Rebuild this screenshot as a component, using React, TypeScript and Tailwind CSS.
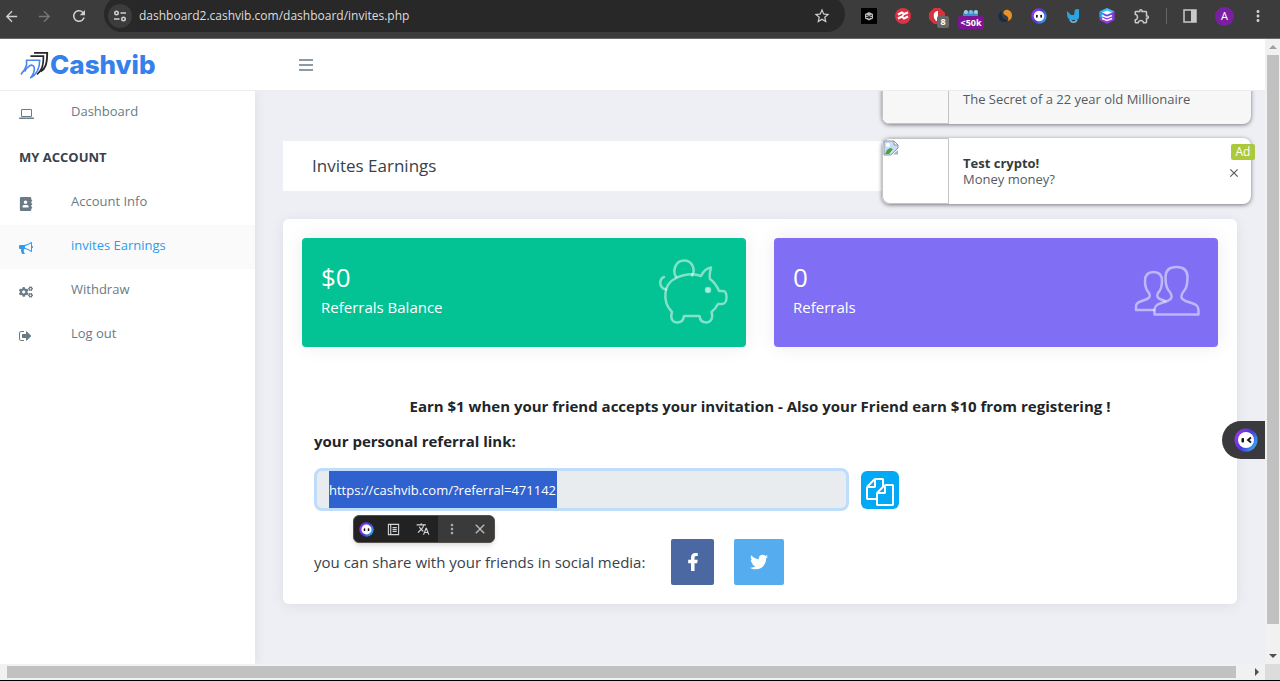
import React, { useEffect, useRef } from "react";
import { FaAddressBook, FaCogs, FaFacebookF, FaTwitter } from "react-icons/fa";
import { MdArrowBack, MdArrowForward, MdRefresh, MdStarBorder, MdMoreVert, MdOutlineExtension, MdTranslate, MdClose } from "react-icons/md";

function LaptopIcon() {
  return (
    <svg viewBox="0 0 1920 1536" className="h-3 w-[15px]" fill="currentColor" aria-hidden="true">
      <path d="M416 1152q-66 0-113-47t-47-113v-704q0-66 47-113t113-47h1088q66 0 113 47t47 113v704q0 66-47 113t-113 47h-1088zm-32-864v704q0 13 9.5 22.5t22.5 9.5h1088q13 0 22.5-9.5t9.5-22.5v-704q0-13-9.5-22.5t-22.5-9.5h-1088q-13 0-22.5 9.5t-9.5 22.5zm1376 928h160v96q0 40-47 68t-113 28h-1600q-66 0-113-28t-47-68v-96h1760zm-720 96q16 0 16-16t-16-16h-160q-16 0-16 16t16 16h160z" />
    </svg>
  );
}

function BullhornIcon() {
  return (
    <svg viewBox="0 0 1792 1792" className="size-[14px]" fill="currentColor" aria-hidden="true">
      <path d="M1664 640q53 0 90.5 37.5t37.5 90.5-37.5 90.5-90.5 37.5v384q0 52-38 90t-90 38q-417-347-812-380-58 19-91 66t-31 100.5 40 92.5q-20 33-23 65.5t6 58 33.5 55 48 50 61.5 50.5q-29 58-111.5 83t-168.5 11.5-132-55.5q-7-23-29.5-87.5t-32-94.5-23-89-15-101 3.5-98.5 22-110.5h-122q-66 0-113-47t-47-113v-192q0-66 47-113t113-47h480q435 0 896-384 52 0 90 38t38 90v384zm-128 604v-954q-394 302-768 343v270q377 42 768 341z" />
    </svg>
  );
}

function SignOutIcon() {
  return (
    <svg viewBox="0 0 1792 1792" className="size-[14px]" fill="currentColor" aria-hidden="true">
      <path d="M640 1440q0 4 1 20t.5 26.5-3 23.5-10 19.5-20.5 6.5h-320q-119 0-203.5-84.5t-84.5-203.5v-704q0-119 84.5-203.5t203.5-84.5h320q13 0 22.5 9.5t9.5 22.5q0 4 1 20t.5 26.5-3 23.5-10 19.5-20.5 6.5h-320q-66 0-113 47t-47 113v704q0 66 47 113t113 47h312l11.5 1 11.5 3 8 5.5 7 9 2 13.5zm928-544q0 26-19 45l-544 544q-19 19-45 19t-45-19-19-45v-288h-448q-26 0-45-19t-19-45v-384q0-26 19-45t45-19h448v-288q0-26 19-45t45-19 45 19l544 544q19 19 19 45z" />
    </svg>
  );
}

function FilesIcon() {
  return (
    <svg viewBox="0 0 1792 1792" className="size-7" fill="currentColor" aria-hidden="true">
      <path d="M1696 384q40 0 68 28t28 68v1216q0 40-28 68t-68 28h-960q-40 0-68-28t-28-68v-288h-544q-40 0-68-28t-28-68v-672q0-40 20-88t48-76l408-408q28-28 76-48t88-20h416q40 0 68 28t28 68v328q68-40 128-40h416zm-544 213l-299 299h299v-299zm-640-384l-299 299h299v-299zm196 647l316-316v-416h-384v416q0 40-28 68t-68 28h-416v640h512v-256q0-40 20-88t48-76zm956 804v-1152h-384v416q0 40-28 68t-68 28h-416v640h896z" />
    </svg>
  );
}

function PiggyIcon() {
  return (
    <svg viewBox="0 0 70 66" className="h-[66px] w-[70px] text-white/50" fill="none" stroke="currentColor" strokeWidth="2.5" strokeLinecap="round" strokeLinejoin="round" aria-hidden="true">
      <path d="M18 19C14 12 18 2.500 26 2.500S38 11 34 17.500" />
      <path d="M6 19C1 21 .5 30 8 31.500" />
      <path d="M18 20C28 15.500 36 15.500 43 18C45 14 49 10 53 9.500C52 14 51 18 52 21C56 24 59 28 61 33H65C67 33 68.500 35 68.500 39.500S66 46 64 46H60C58 50 56 52 53.500 54C55.500 60 53 64.500 48 64.500C44 64.500 42 62 41.500 58H26C25.500 62 23.500 64.500 19.500 64.500C14 64.500 12 60 14 54C9 49 6.500 43 7.500 35C8 29 12 23 18 20Z" />
      <circle cx="50" cy="32" r="2" fill="currentColor" />
    </svg>
  );
}

function PeopleIcon() {
  return (
    <svg viewBox="0 0 66 52" className="h-[52px] w-[66px] text-white/50" fill="none" stroke="currentColor" strokeWidth="2.5" strokeLinejoin="round" strokeLinecap="round" aria-hidden="true">
      <path d="M42.500 2C35.500 2 31.500 5.500 31.500 12C31.500 21 33 24 36.500 28C38.500 32 38 34 33.500 36L26 38.500C21.500 40 20.500 42 20.500 46V49.500H64.500V46C64.500 42 63.500 40 59 38.500L51.500 36C47 34 46.500 32 48.500 28C52 24 53.500 21 53.500 12C53.500 5.500 49.500 2 42.500 2Z" />
      <path d="M20 45H2V42C2 39 3 37.500 6.500 36.500L12 34.500C16 33 16.500 31 15 28C12 25 11 22 11 16C11 10 14 7 19.500 7S28 10 28 16C28 22 27 25 24 28C22.500 31 23 33 27 34.500L31 36" />
    </svg>
  );
}

function CashIcon() {
  return (
    <svg viewBox="0 0 32 32" className="h-8 w-[30px]" fill="none" strokeWidth="2" aria-hidden="true">
      <path d="M16 4V3H29C29 15 27 20 22 23" stroke="#26262b" />
      <path d="M12 7.500V6.500H25C25 18 23 22 18 26" stroke="#26262b" strokeWidth="1.800" />
      <path d="M7 11H21C21 20 18 26 11 30C15 25 16 21 15 18C13 14 8 17 5 23M7 10V16C6 20 4 23 1 26" stroke="#4a86ee" strokeWidth="1.700" />
    </svg>
  );
}

function BotFace({ size, wink }: { size: string; wink?: boolean }) {
  return (
    <svg viewBox="0 0 24 24" className={size} aria-hidden="true">
      <defs>
        <linearGradient id="bot-ring" x1="0" y1="0.200" x2="1" y2="0.800">
          <stop offset="0" stopColor="#a238e8" />
          <stop offset="0.500" stopColor="#4b36e0" />
          <stop offset="1" stopColor="#31b6f0" />
        </linearGradient>
      </defs>
      <circle cx="12" cy="12" r="11.500" fill="url(#bot-ring)" />
      <circle cx="12" cy="12" r="8" fill="#fff" />
      <rect x="7.500" y="10" width="2.500" height="4.500" rx="1" fill="#111" />
      {wink ? <path d="M17 9.500L14 12L17 14.500" stroke="#111" strokeWidth="1.800" fill="none" /> : <rect x="14" y="10" width="2.500" height="4.500" rx="1" fill="#111" />}
    </svg>
  );
}

function Extensions() {
  return (
    <div className="flex items-center gap-[18px]">
      <svg viewBox="0 0 16 16" className="size-4" aria-hidden="true">
        <rect width="16" height="16" fill="#000" />
        <path d="M8 4L12 6V10.500L8 12.500L4 10.500V6Z" fill="#bbb" />
        <path d="M5 7L8 8.500L11 7M8 8.500V11M5 9.500H11" stroke="#222" fill="none" />
      </svg>
      <svg viewBox="0 0 16 16" className="size-4" aria-hidden="true">
        <circle cx="8" cy="8" r="8" fill="#dc3245" />
        <path d="M3 6.500L7 4.500L9 6L13 4.500M3 10.500L7 8.500L9 10.500L13 8.500M9 6L7 8.500" stroke="#fff" strokeWidth="2" fill="none" />
      </svg>
      <div className="relative">
        <svg viewBox="0 0 16 16" className="size-4" aria-hidden="true">
          <path d="M5 0H11L16 5V11L11 16H5L0 11V5Z" fill="#d8323c" />
          <path d="M5 10C4 5 6 3 9 3V8L11 13H7Z" fill="#fff" />
        </svg>
        <span className="absolute top-2 left-2 flex h-3 w-3 items-center justify-center rounded-xs bg-[#686868] text-[9px] font-bold text-white">8</span>
      </div>
      <div className="relative">
        <svg viewBox="0 0 16 16" className="size-4" aria-hidden="true">
          <path d="M0 9V5L2 2L5 4L7 2L10 4L12 2L15 4V9Z" fill="#3a91cc" />
          <circle cx="3" cy="4" r="2" fill="#a9cbe0" /><circle cx="8" cy="4" r="2" fill="#7db9df" /><circle cx="13" cy="4" r="2" fill="#a9cbe0" />
        </svg>
        <span className="absolute top-2 left-[-5px] flex h-[13px] w-[26px] items-center justify-center rounded-xs bg-[#7b1594] text-[9px] font-bold text-white">&lt;50k</span>
      </div>
      <svg viewBox="0 0 16 16" className="size-4" aria-hidden="true">
        <path d="M5 3C1 5 0 11 4 13C7 15 10 14 10 12C6 12 4 8 5 3Z" fill="#182b4d" />
        <path d="M7 3C10 0 15 3 15 7C15 10 14 12 11 13C12 10 11 8 8 7C6 6 6 4 7 3Z" fill="#e8912b" />
      </svg>
      <BotFace size="size-4" />
      <svg viewBox="0 0 16 16" className="size-4" aria-hidden="true">
        <path d="M2 3L6 7H9L10 1.500L14 1V9C14 12 11 12 9 12H5C2 10 2 7 2 3Z" fill="#27a5e4" />
        <path d="M5 12C7 15 10 15 12 12" stroke="#6cc1e5" strokeWidth="1.500" fill="none" />
      </svg>
      <svg viewBox="0 0 16 16" className="size-4" aria-hidden="true">
        <path d="M8 0L15.500 3.500V12L8 16L.5 12V3.500Z" fill="#8a39e0" />
        <path d="M.5 3.500L8 0L15.500 3.500L8 7Z" fill="#29c5ee" />
        <path d="M.5 4V9L5 11V6Z" fill="#29a5ee" />
        <path d="M3 4.500L8 2.500L13 4.500L8 6.500Z" fill="#fff" />
        <path d="M3 7.500L8 9.500L13 7.500M3 10.500L8 12.500L13 10.500" stroke="#fff" strokeWidth="1.500" fill="none" />
      </svg>
      <MdOutlineExtension className="size-[18px] text-[#c9c9c9]" />
    </div>
  );
}

function BrowserBar() {
  return (
    <div className="flex h-[39px] shrink-0 items-center border-b border-[#6a6a6a] bg-[#3c3c3c] pb-[6px] pl-[3px] text-[#d0d0d0]">
      <button aria-label="Back" className="mr-4"><MdArrowBack className="size-[17px]" /></button>
      <button aria-label="Forward" className="mr-[17px]"><MdArrowForward className="size-[17px] text-[#777]" /></button>
      <button aria-label="Reload" className="mr-4"><MdRefresh className="size-[18px]" /></button>
      <div className="-mt-1 flex h-9 min-w-0 flex-1 items-center rounded-full bg-[#282828] pt-1 pr-[14px] pl-1">
        <button aria-label="Site information" className="mr-[7px] flex size-6 items-center justify-center rounded-full bg-[#3c3c3c]">
          <svg viewBox="0 0 14 14" className="size-[14px]" fill="none" stroke="currentColor" strokeWidth="1.600" aria-hidden="true">
            <circle cx="3.500" cy="4" r="1.700" /><path d="M7.500 4H13M1 10H6.500" /><circle cx="10.500" cy="10" r="1.700" />
          </svg>
        </button>
        <input aria-label="Address" readOnly value="dashboard2.cashvib.com/dashboard/invites.php" className="min-w-0 flex-1 bg-transparent text-xs text-[#dedede] outline-none" />
        <button aria-label="Bookmark"><MdStarBorder className="size-[18px]" /></button>
      </div>
      <div className="flex items-center pl-4">
        <Extensions />
        <span className="mx-[15px] h-4 w-px bg-[#666]" />
        <button aria-label="Side panel" className="mr-[17px]">
          <svg viewBox="0 0 16 16" className="size-4" aria-hidden="true"><rect x="2" y="2" width="12" height="12" fill="none" stroke="#c9c9c9" strokeWidth="1.500" /><path d="M9 2H14V14H9Z" fill="#c9c9c9" /></svg>
        </button>
        <button aria-label="Profile" className="mr-[15px] flex size-[19px] items-center justify-center rounded-full bg-[#7b1fa2] text-[11px] text-white">A</button>
        <button aria-label="Browser menu" className="mr-[13px]"><MdMoreVert className="size-[18px]" /></button>
      </div>
    </div>
  );
}

function NavItem({ icon, label, active }: { icon: React.ReactNode; label: string; active?: boolean }) {
  return (
    <a href="#" className={active ? "flex h-11 items-center bg-[#fafafa] pb-[2px] pl-[19px] text-[#2b9cf0]" : "flex h-11 items-center pb-[2px] pl-[19px] text-[#6a7b85]"}>
      <span className="flex w-[52px] pt-1 text-sm">{icon}</span>
      <span className="text-[13px]">{label}</span>
    </a>
  );
}

function Sidebar() {
  return (
    <nav aria-label="Main" className="w-[255px] shrink-0 bg-white shadow-[2px_0_10px_rgba(0,0,0,0.06)]">
      <NavItem icon={<LaptopIcon />} label="Dashboard" />
      <h2 className="flex h-[46px] items-center pl-[19px] text-[13px] font-bold text-[#37424a]">MY ACCOUNT</h2>
      <NavItem icon={<FaAddressBook />} label="Account Info" />
      <NavItem icon={<BullhornIcon />} label="invites Earnings" active />
      <NavItem icon={<FaCogs />} label="Withdraw" />
      <NavItem icon={<SignOutIcon />} label="Log out" />
    </nav>
  );
}

function Ads() {
  return (
    <aside className="absolute top-[-33px] right-[14px] flex w-[369px] flex-col gap-[14px] text-[13px] leading-4 text-[#545b62]">
      <div className="flex h-[66px] overflow-hidden rounded-lg bg-[#f7f7f7] shadow-[0_1px_4px_rgba(0,0,0,0.5)]">
        <div className="w-[67px] border border-[#c4c4c4]" />
        <div className="flex flex-col justify-end pb-[17px] pl-[14px]">The Secret of a 22 year old Millionaire</div>
      </div>
      <div className="relative flex h-[66px] rounded-lg bg-white shadow-[0_1px_4px_rgba(0,0,0,0.5)]">
        <div className="w-[67px] rounded-l-lg border border-[#c4c4c4] pt-px">
          <svg viewBox="0 0 16 16" className="size-4" aria-hidden="true">
            <path d="M1 1H11L15 5V8L8 15H1Z" fill="#c9dcf7" stroke="#8f979f" />
            <path d="M11 1V5H15Z" fill="#fff" stroke="#8f979f" />
            <circle cx="5" cy="5" r="2" fill="#fff" />
            <path d="M2 14L4 10L7 8L10 9L6 14Z" fill="#43a63b" />
            <path d="M10 14.500L15 10V14.500Z" fill="#aab3bb" />
          </svg>
        </div>
        <div className="flex flex-col justify-center pl-[14px]">
          <strong className="text-[#343b42]">Test crypto!</strong>
          <span>Money money?</span>
        </div>
        <span className="absolute top-[6px] right-[-4px] flex h-4 w-6 items-center justify-center rounded-xs bg-[#acc93b] text-xs text-white">Ad</span>
        <button aria-label="Close ad" className="absolute top-[28px] right-[10px]"><MdClose className="size-[14px]" /></button>
      </div>
    </aside>
  );
}

function StatCard({ value, label, tone, children }: { value: string; label: string; tone: string; children: React.ReactNode }) {
  return (
    <div className={`flex h-[109px] flex-1 items-center justify-between rounded pr-[18px] pb-1 pl-[19px] text-white shadow-[0_0_20px_rgba(0,0,0,0.08)] ${tone}`}>
      <div>
        <p className="text-[26px] leading-8">{value}</p>
        <p className="text-[15px] leading-7">{label}</p>
      </div>
      {children}
    </div>
  );
}

function SelectionTools() {
  return (
    <div className="absolute top-[47px] left-[39px] flex h-7 w-[142px] overflow-hidden rounded-md border border-[#55504c] bg-[#222] text-[#d5d5d5] shadow-md">
      <button aria-label="Assistant" className="flex w-[25px] items-center justify-center"><BotFace size="size-[15px]" /></button>
      <button aria-label="Notes" className="flex w-7 items-center justify-center">
        <svg viewBox="0 0 14 14" className="size-[13px]" fill="none" stroke="currentColor" strokeWidth="1.200" aria-hidden="true"><path d="M1.500 1.500H12.500V12.500H1.500ZM4 1.500V12.500M6 5H10.500M6 7H10.500M6 9H10.500" /></svg>
      </button>
      <button aria-label="Translate" className="flex flex-1 items-center justify-center"><MdTranslate className="size-[14px]" /></button>
      <button aria-label="More" className="flex w-7 items-center justify-center bg-[#3a3a3a] text-[#aaa]"><MdMoreVert className="size-4" /></button>
      <button aria-label="Close" className="flex w-7 items-center justify-center bg-[#3a3a3a] text-[#bbb]"><MdClose className="size-4" /></button>
    </div>
  );
}

function Invites() {
  const linkRef = useRef<HTMLInputElement>(null);
  useEffect(() => {
    linkRef.current?.focus();
    linkRef.current?.select();
  }, []);
  return (
    <section className="rounded-md bg-white p-[19px] shadow-[0_2px_14px_rgba(0,0,0,0.07)]">
      <div className="flex gap-7">
        <StatCard value="$0" label="Referrals Balance" tone="bg-[#03c293]"><PiggyIcon /></StatCard>
        <StatCard value="0" label="Referrals" tone="bg-[#806ef5]"><PeopleIcon /></StatCard>
      </div>
      <div className="px-3 pt-[47px]">
        <p className="text-center text-[15px] leading-6 font-bold text-[#212529]">Earn $1 when your friend accepts your invitation - Also your Friend earn $10 from registering !</p>
        <label htmlFor="referral" className="mt-[11px] block text-[15px] leading-6 font-bold text-[#212529]">your personal referral link:</label>
        <div className="mt-[15px] flex items-center gap-3">
          <div className="relative w-[535px]">
            <input id="referral" ref={linkRef} readOnly value="https://cashvib.com/?referral=471142" className="block h-[43px] w-full rounded-lg border-3 border-[#bfdcfb] bg-[#e9ecef] bg-[linear-gradient(#2f62cf,#2f62cf)] bg-[length:228px_100%] bg-[position:12px_0] bg-no-repeat px-3 text-[13px] text-white outline-none selection:bg-[#2f62cf] selection:text-white" />
            <SelectionTools />
          </div>
          <button aria-label="Copy link" className="flex size-[38px] items-center justify-center rounded-md bg-[#03a9f4] pt-1 text-white"><FilesIcon /></button>
        </div>
        <div className="mt-7 flex h-[46px] items-center">
          <p className="mr-[26px] text-[15px] text-[#37424a]">you can share with your friends in social media:</p>
          <a href="#" aria-label="Facebook" className="mr-5 flex h-[46px] w-[43px] items-center justify-center rounded-xs bg-[#4c68a3] text-white"><FaFacebookF className="size-[18px]" /></a>
          <a href="#" aria-label="Twitter" className="flex h-[46px] w-[50px] items-center justify-center rounded-xs bg-[#55acee] text-white"><FaTwitter className="size-[18px]" /></a>
        </div>
      </div>
    </section>
  );
}

export default function App() {
  return (
    <div className="flex min-h-screen flex-col border-b border-black bg-[#f1f1f1] font-['Open_Sans',sans-serif]">
      <BrowserBar />
      <div className="flex flex-1">
        <div className="flex min-w-0 flex-1 flex-col bg-[#eeeff5]">
          <header className="relative z-10 flex h-[52px] shrink-0 items-center border-b border-[#ececee] bg-white pl-5">
            <a href="#" className="flex w-[279px] items-center font-['Inter',sans-serif] text-[26px] font-extrabold text-[#3580ea]">
              <CashIcon />Cashvib
            </a>
            <button aria-label="Toggle menu" className="flex w-[14px] flex-col gap-[3px]">
              <span className="h-[2px] w-full bg-[#8d9aa6]" />
              <span className="h-[2px] w-full bg-[#8d9aa6]" />
              <span className="h-[2px] w-full bg-[#8d9aa6]" />
            </button>
          </header>
          <div className="relative flex flex-1 overflow-hidden">
            <Sidebar />
            <main className="min-w-0 flex-1 px-7 pt-[50px] pb-[59px]">
              <h1 className="mb-7 flex h-[50px] items-center bg-white pl-[29px] text-[17px] text-[#37424a]">Invites Earnings</h1>
              <Invites />
            </main>
            <Ads />
            <button aria-label="Open assistant" className="absolute top-[330px] right-0 flex h-[38px] w-[43px] items-center justify-center rounded-l-full bg-[#3a3a3e] pl-1">
              <BotFace size="size-6" wink />
            </button>
          </div>
        </div>
        <div className="flex w-[15px] flex-col items-center bg-[#f1f1f1]">
          <svg viewBox="0 0 8 16" className="h-4 w-2" aria-hidden="true"><path d="M0 10L4 6L8 10Z" fill="#a0a0a0" /></svg>
          <div className="w-3 flex-1 bg-[#c1c1c1]" />
          <div className="h-6" />
          <svg viewBox="0 0 8 16" className="h-4 w-2" aria-hidden="true"><path d="M0 6L4 10L8 6Z" fill="#505050" /></svg>
        </div>
      </div>
      <div className="flex h-4 shrink-0 items-center pl-[7px]">
        <div className="h-3 flex-1 bg-[#c1c1c1]" />
        <div className="flex w-[29px] justify-end pr-1">
          <svg viewBox="0 0 8 8" className="size-2" aria-hidden="true"><path d="M2 0L6 4L2 8Z" fill="#505050" /></svg>
        </div>
        <div className="h-4 w-[15px] bg-[#dcdcdc]" />
      </div>
    </div>
  );
}
